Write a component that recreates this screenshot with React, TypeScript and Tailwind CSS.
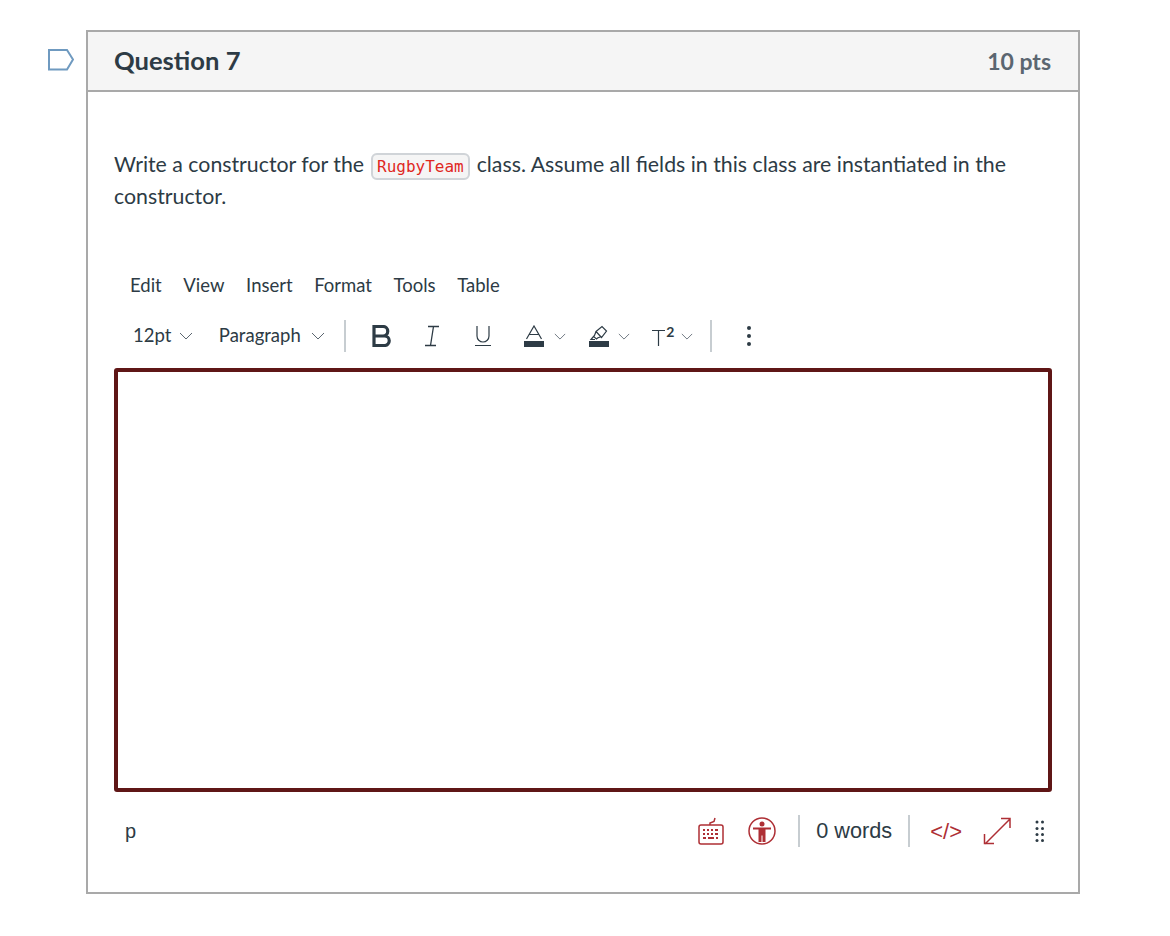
const lato = "font-['Lato','Liberation_Sans',sans-serif]";

function Chevron({ className }: { className: string }) {
    return (
        <svg width="14" height="8" viewBox="0 0 14 8" fill="none" stroke="#5b6670" strokeWidth="1" className={className}>
            <path d="M1 1l6 6 6-6" />
        </svg>
    );
}

function Divider({ className }: { className: string }) {
    return <div className={`w-[2px] bg-[#c7cdd1] ${className}`} />;
}

function Toolbar() {
    return (
        <div className="flex h-[34px] items-center text-[18.500px] text-[#2d3b45]">
            <span className="ml-[19px]">12pt</span>
            <Chevron className="ml-[8px]" />
            <span className="ml-[25.500px]">Paragraph</span>
            <Chevron className="ml-[10px]" />
            <Divider className="ml-[19.500px] h-[32px]" />
            {/* bold */}
            <svg width="20" height="22" viewBox="0 0 20 22" fill="none" stroke="#2d3b45" strokeWidth="3.200" className="ml-[26px]">
                <path d="M2 1.500h9a4.750 4.750 0 010 9.500H2zM2 11h10.500a4.750 4.750 0 010 9.500H2z" />
            </svg>
            {/* italic */}
            <svg width="16" height="22" viewBox="0 0 16 22" fill="none" stroke="#2d3b45" strokeWidth="1.300" className="ml-[32px]">
                <path d="M4 1.500h11M1 20.500h11M9.500 1.500L6.500 20.500" />
            </svg>
            {/* underline */}
            <svg width="18" height="22" viewBox="0 0 18 22" fill="none" stroke="#2d3b45" strokeWidth="1.200" className="ml-[34px]">
                <path d="M3 1v10a6 6 0 0012 0V1M1 20.500h16" />
            </svg>
            {/* font color */}
            <svg width="20" height="22" viewBox="0 0 20 22" fill="none" className="ml-[32px]">
                <path d="M2.500 14L10 1l7.500 13M5 9.500h10" stroke="#2d3b45" strokeWidth="1.200" />
                <rect y="16" width="20" height="6" fill="#2d3b45" />
            </svg>
            <Chevron className="ml-[10px] h-[7px] w-[12px]" />
            {/* highlight */}
            <svg width="20" height="22" viewBox="0 0 20 22" fill="none" className="ml-[23px]">
                <path d="M7 6.500l6-5 4.500 4.500-5 6.500zM7 6.500l-1.500 4-1 1 3 2.500 1-1 4-1.500M4.500 11.500L2 14.500h4" stroke="#2d3b45" strokeWidth="1.200" />
                <rect y="16" width="20" height="6" fill="#2d3b45" />
            </svg>
            <Chevron className="ml-[9px] h-[7px] w-[12px]" />
            {/* superscript */}
            <svg width="20" height="20" viewBox="0 0 20 20" fill="none" stroke="#2d3b45" strokeWidth="1.200" className="ml-[21px]">
                <path d="M1 4.500h13M7.500 4.500V20" />
            </svg>
            <span className="ml-[-5px] mt-[-9px] text-[14px] font-bold leading-none">2</span>
            <Chevron className="ml-[7px] h-[7px] w-[12px]" />
            <Divider className="ml-[17px] h-[32px]" />
            <svg width="6" height="22" viewBox="0 0 6 22" fill="#2d3b45" className="ml-[34px]">
                <circle cx="3" cy="3" r="2" />
                <circle cx="3" cy="11" r="2" />
                <circle cx="3" cy="19" r="2" />
            </svg>
        </div>
    );
}

function StatusBar() {
    return (
        <div className="mt-[20px] flex h-[38px] items-center text-[#2d3b45]">
            <span className="ml-[11px] text-[20px] font-['Liberation_Sans',sans-serif]">p</span>
            <svg width="26" height="28" viewBox="0 0 26 28" fill="none" className="ml-auto">
                <rect x="1" y="8" width="24" height="19" rx="2" stroke="#ae2f35" strokeWidth="1.500" />
                <path d="M12 8V6l4-1.500L17 1" stroke="#ae2f35" strokeWidth="1.500" />
                <path d="M5 13h2M9 13h2M13 13h2M17 13h3M5 17h2M9 17h2M13 17h2M17 17h3M5 21h3M10 21h6M18 21h2" stroke="#ae2f35" strokeWidth="2.200" />
            </svg>
            <svg width="28" height="28" viewBox="0 0 28 28" fill="none" className="ml-[24px]">
                <circle cx="14" cy="14" r="13" stroke="#ae2f35" strokeWidth="1.500" />
                <circle cx="14" cy="7" r="2.500" fill="#ae2f35" />
                <path d="M5 10.500h18v2h-5.500V25h-3v-6.500h-1V25h-3V12.500H5z" fill="#ae2f35" />
            </svg>
            <Divider className="ml-[22px] h-[32px]" />
            <span className="ml-[16px] text-[21.700px] font-['Liberation_Sans',sans-serif] leading-none">0 words</span>
            <Divider className="ml-[16px] h-[32px]" />
            <span className="ml-[20px] text-[22px] text-[#ae2f35] font-['Liberation_Sans',sans-serif]">&lt;/&gt;</span>
            <svg width="28" height="28" viewBox="0 0 28 28" fill="none" stroke="#ae2f35" strokeWidth="1.500" className="ml-[21px]">
                <path d="M2 27L27 2M18 1.500h9V11M1.500 17v9.500H11" />
            </svg>
            <svg width="12" height="24" viewBox="0 0 12 24" fill="#2d3b45" className="ml-[23px] mr-[6px]">
                <circle cx="3" cy="3" r="1.500" />
                <circle cx="8.500" cy="3" r="1.500" />
                <circle cx="3" cy="9.500" r="1.500" />
                <circle cx="8.500" cy="9.500" r="1.500" />
                <circle cx="3" cy="15.500" r="1.500" />
                <circle cx="8.500" cy="15.500" r="1.500" />
                <circle cx="3" cy="21.500" r="1.500" />
                <circle cx="8.500" cy="21.500" r="1.500" />
            </svg>
        </div>
    );
}

export default function App() {
    return (
        <main className={`flex min-h-screen items-start bg-white pl-[48px] pt-[30px] ${lato}`}>
            {/* question flag */}
            <svg width="26" height="22" viewBox="0 0 26 22" fill="none" stroke="#6f9ac0" strokeWidth="2" className="mt-[19px]">
                <path d="M1 1h18l6 9.500-6 10H1z" />
            </svg>
            <section className="ml-[12px] h-[864px] w-[994px] border-2 border-[#a9a9a9]">
                <div className="flex h-[60px] items-center justify-between border-b-2 border-[#a9a9a9] bg-[#f5f5f5] pl-[26px] pr-[27px]">
                    <h2 className="mt-[-2px] text-[25.600px] font-bold text-[#2d3b45]">Question 7</h2>
                    <span className="text-[23px] font-bold text-[#5b6670]">10 pts</span>
                </div>
                <div className="px-[26px]">
                    <p className="mt-[56px] text-[21.300px] leading-[32px] text-[#2d3b45]">
                        Write a constructor for the{" "}
                        <code className="mx-[1px] rounded-[6px] border-2 border-[#d0d4d8] bg-[#f5f5f5] px-[4.500px] py-[2px] font-['DejaVu_Sans_Mono',monospace] text-[16px] leading-[20px] text-[#e0281f]">RugbyTeam</code>{" "}
                        class. Assume all fields in this class are instantiated in the constructor.
                    </p>
                    <nav className="mt-[60px] flex gap-[21.600px] pl-[16px] text-[18.500px] leading-[26px] text-[#2d3b45]">
                        <span>Edit</span>
                        <span>View</span>
                        <span>Insert</span>
                        <span>Format</span>
                        <span>Tools</span>
                        <span>Table</span>
                    </nav>
                    <div className="mt-[21px]">
                        <Toolbar />
                    </div>
                    <div className="mt-[15px] h-[424px] rounded-[3px] border-4 border-[#5f1616]" />
                    <StatusBar />
                </div>
            </section>
        </main>
    );
}
